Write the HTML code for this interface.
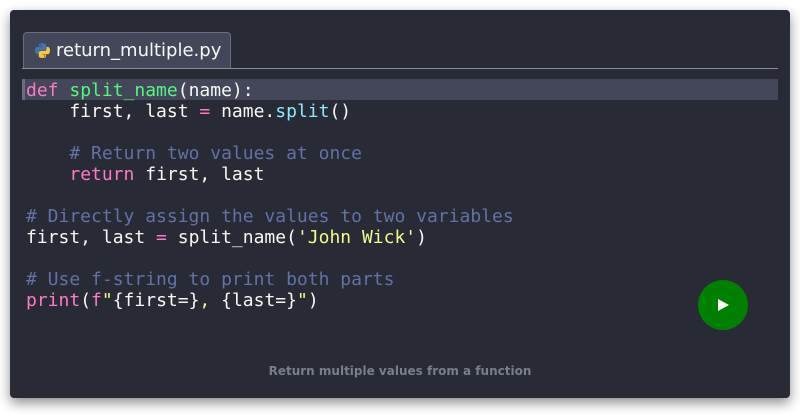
<!DOCTYPE html>
<html><head><style>
body{margin:0;width:800px;height:418px;background:#fff;position:relative;overflow:hidden}
.card{position:absolute;left:10px;top:10px;width:780px;height:388px;background:#282a36;border-radius:4px;box-shadow:0 5px 12px rgba(0,0,0,.45)}
.tab{position:absolute;left:23px;top:32px;width:208px;height:36px;background:#44475a;border:1px solid #6a6d80;border-bottom:none;border-radius:4px 4px 0 0;box-sizing:border-box;color:#f8f8f2;font:18px "DejaVu Sans","Liberation Sans",sans-serif;line-height:35px;padding-left:32px}
.rule{position:absolute;left:22px;top:68px;width:756px;height:1px;background:#8a8c99}
.hl{position:absolute;left:22px;top:79px;width:756px;height:21px;background:#44475a;border-left:3px solid #6a6d80;box-sizing:border-box}
pre{position:absolute;left:26px;top:80px;margin:0;font:18px "DejaVu Sans Mono","Liberation Mono",monospace;line-height:21px;color:#f8f8f2}
.k{color:#ff79c6}.f{color:#50fa7b}.c{color:#6272a4}.s{color:#f1fa8c}.b{color:#8be9fd}
.btn{position:absolute;left:698px;top:280px;width:50px;height:50px;border-radius:50%;background:#008000}
.btn:after{content:"";position:absolute;left:20px;top:19px;border-left:11px solid #fff;border-top:6px solid transparent;border-bottom:6px solid transparent}
.cap{position:absolute;left:0;width:800px;top:364px;text-align:center;font:bold 12px "DejaVu Sans","Liberation Sans",sans-serif;color:#7a7d8c}
</style></head><body>
<div class="card"></div>
<div class="tab"><svg style="position:absolute;left:10px;top:9px" width="17" height="17" viewBox="0 0 16 16"><path d="M8 1C4.5 1 4.7 2.5 4.7 2.5V4h3.4v.5H3.3S1 4.2 1 7.9s2 3.5 2 3.5h1.2V9.7s-.1-2 2-2h3.4s1.9 0 1.9-1.9V3S11.8 1 8 1zM6.1 2.1a.6.6 0 1 1 0 1.2.6.6 0 0 1 0-1.2z" fill="#3b78b0"/><path d="M8 15c3.5 0 3.3-1.5 3.3-1.5V12H7.9v-.5h4.8s2.3.3 2.3-3.4-2-3.5-2-3.5h-1.2v1.7s.1 2-2 2H6.4s-1.9 0-1.9 1.9V13S4.2 15 8 15zm1.9-1.1a.6.6 0 1 1 0-1.2.6.6 0 0 1 0 1.2z" fill="#f7c93e"/></svg>return_multiple.py</div>
<div class="rule"></div>
<div class="hl"></div>
<pre><span class="k">def</span> <span class="f">split_name</span>(name):
    first, last <span class="k">=</span> name.<span class="b">split</span>()

    <span class="c"># Return two values at once</span>
    <span class="k">return</span> first, last

<span class="c"># Directly assign the values to two variables</span>
first, last <span class="k">=</span> split_name(<span class="s">'John Wick'</span>)

<span class="c"># Use f-string to print both parts</span>
<span class="k">print</span>(<span class="k">f</span><span class="s">"</span>{first=}<span class="s">, </span>{last=}<span class="s">"</span>)</pre>
<div class="btn"></div>
<div class="cap">Return multiple values from a function</div>
</body></html>
